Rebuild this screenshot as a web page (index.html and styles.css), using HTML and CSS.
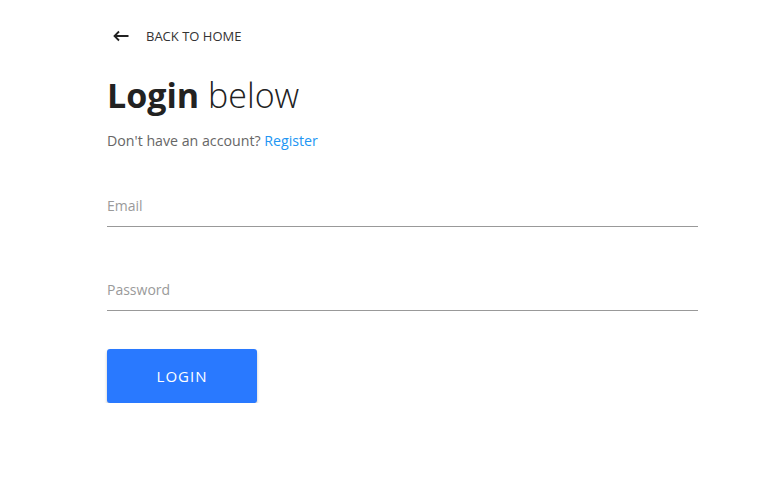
FILE: index.html
```html
<!DOCTYPE html>
<html>
<head>
<meta charset="utf-8">
<link rel="stylesheet" href="styles.css">
</head>
<body>
<main class="page">
  <a class="back" href="#">
    <svg class="back-icon" width="16" height="12" viewBox="0 0 16 12"><path d="M15.5 6H1.5M6 1.5L1.5 6L6 10.5" fill="none" stroke="#222" stroke-width="1.8"/></svg>
    <span>BACK TO HOME</span>
  </a>
  <h1 class="title"><b>Login</b> below</h1>
  <p class="sub">Don't have an account? <a href="#" class="link">Register</a></p>
  <form class="form">
    <label class="field"><input type="text" placeholder="Email"></label>
    <label class="field"><input type="password" placeholder="Password"></label>
    <button type="button" class="btn">LOGIN</button>
  </form>
</main>
</body>
</html>
```
FILE: styles.css
```css
* { box-sizing: border-box; }
html, body { margin: 0; background: #fff; }
body { font-family: "Open Sans", "Noto Sans", sans-serif; color: #222; }
.page { width: 591px; margin-left: 107px; padding-top: 26px; display: flex; flex-direction: column; }
.back { display: flex; align-items: center; gap: 17px; padding-left: 6px; text-decoration: none; color: #333; font-size: 13px; height: 20px; }
.back-icon { width: 16px; height: 12px; }
.title { margin: 29px 0 0; font-size: 34px; font-weight: 300; line-height: 40px; color: #222; }
.title b { font-weight: 700; }
.sub { margin: 16px 0 0; font-size: 14.2px; color: #666; line-height: 20px; }
.link { color: #2196f3; text-decoration: none; }
.form { display: flex; flex-direction: column; margin-top: 33px; }
.field { display: block; border-bottom: 1px solid #999; height: 43px; margin-bottom: 41px; }
.field input { border: 0; outline: 0; width: 100%; font-family: inherit; font-size: 14px; padding: 12px 0 10px; color: #333; background: transparent; }
.field input::placeholder { color: #9a9a9a; }
.btn { align-self: flex-start; width: 150px; height: 54px; margin-top: -3px; background: #2979ff; color: #fff; border: 0; border-radius: 3px; font-family: inherit; font-size: 15px; letter-spacing: 1px; box-shadow: 0 2px 3px rgba(0,0,0,0.25); }
```
